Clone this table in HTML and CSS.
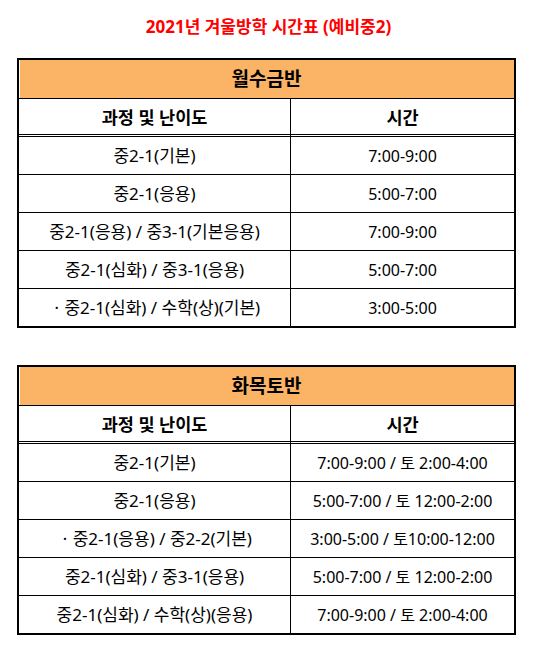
FILE: index.html
```html
<!DOCTYPE html>
<html lang="ko">
<head>
<meta charset="utf-8">
<title>2021년 겨울방학 시간표</title>
<link rel="stylesheet" href="styles.css">
</head>
<body>
<div class="page">
  <h1 class="title">2021년 겨울방학 시간표 (예비중2)</h1>

  <table class="schedule">
    <colgroup><col class="col1"><col class="col2"></colgroup>
    <tr><th class="group" colspan="2">월수금반</th></tr>
    <tr class="head"><th class="c1">과정 및 난이도</th><th class="c2">시간</th></tr>
    <tr><td class="c1">중2-1(기본)</td><td class="c2">7:00-9:00</td></tr>
    <tr><td class="c1">중2-1(응용)</td><td class="c2">5:00-7:00</td></tr>
    <tr><td class="c1">중2-1(응용) / 중3-1(기본응용)</td><td class="c2">7:00-9:00</td></tr>
    <tr><td class="c1">중2-1(심화) / 중3-1(응용)</td><td class="c2">5:00-7:00</td></tr>
    <tr class="last"><td class="c1">ㆍ중2-1(심화) / 수학(상)(기본)</td><td class="c2">3:00-5:00</td></tr>
  </table>

  <table class="schedule second">
    <colgroup><col class="col1"><col class="col2"></colgroup>
    <tr><th class="group" colspan="2">화목토반</th></tr>
    <tr class="head"><th class="c1">과정 및 난이도</th><th class="c2">시간</th></tr>
    <tr><td class="c1">중2-1(기본)</td><td class="c2">7:00-9:00 / 토 2:00-4:00</td></tr>
    <tr><td class="c1">중2-1(응용)</td><td class="c2">5:00-7:00 / 토 12:00-2:00</td></tr>
    <tr><td class="c1">ㆍ중2-1(응용) / 중2-2(기본)</td><td class="c2">3:00-5:00 / 토10:00-12:00</td></tr>
    <tr><td class="c1">중2-1(심화) / 중3-1(응용)</td><td class="c2">5:00-7:00 / 토 12:00-2:00</td></tr>
    <tr class="last"><td class="c1">중2-1(심화) / 수학(상)(응용)</td><td class="c2">7:00-9:00 / 토 2:00-4:00</td></tr>
  </table>
</div>
</body>
</html>
```

FILE: styles.css
```css
html, body {
  margin: 0;
  padding: 0;
  background: #ffffff;
}

body {
  font-family: "Noto Sans", "Noto Sans CJK KR", sans-serif;
  color: #000000;
}

.page {
  width: 537px;
  padding-left: 17px;
  box-sizing: border-box;
}

.title {
  margin: 0 0 0 -17px;
  height: 58px;
  box-sizing: border-box;
  padding-top: 16px;
  font-size: 17px;
  line-height: 22px;
  font-weight: 700;
  color: #ff0000;
  text-align: center;
}

.schedule {
  width: 499px;
  border: 2px solid #000000;
  border-collapse: separate;
  border-spacing: 0;
  table-layout: fixed;
}

.schedule .col1 {
  width: 272px;
}

.schedule .col2 {
  width: 223px;
}

.schedule.second {
  margin-top: 37px;
}

.schedule th,
.schedule td {
  padding: 0;
  text-align: center;
  vertical-align: middle;
  border-bottom: 1px solid #000000;
  white-space: nowrap;
}

.schedule .group {
  height: 38px;
  background: #fbb466;
  font-size: 19px;
  font-weight: 700;
  line-height: 24px;
  box-shadow: inset 1px 0 0 #ffffff;
}

.schedule .head th {
  height: 35px;
  font-size: 17.5px;
  font-weight: 700;
  line-height: 20px;
  border-bottom: 3px double #000000;
}

.schedule td {
  height: 37px;
  font-size: 17px;
  line-height: 20px;
  font-weight: 400;
}

.schedule td.c2 {
  font-size: 16px;
}

.schedule .c1 {
  border-right: 1px solid #000000;
}

.schedule tr.last td {
  border-bottom: none;
}
```
